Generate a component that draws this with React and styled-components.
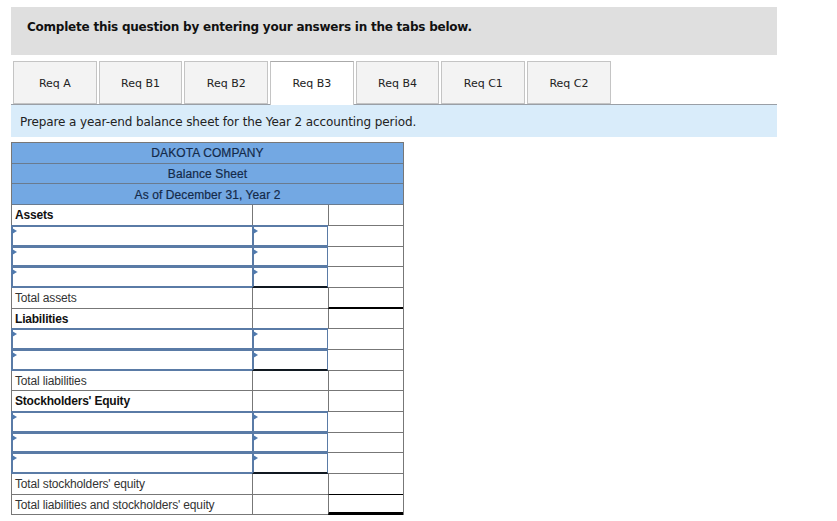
import React from "react";
import styled, { createGlobalStyle } from "styled-components";

const Global = createGlobalStyle`
  html, body { margin: 0; padding: 0; background: #fff; }
`;

const Page = styled.div`
  width: 837px;
  height: 521px;
  overflow: hidden;
  box-sizing: border-box;
  padding: 7px 60px 0 11px;
  font-family: "DejaVu Sans", Verdana, sans-serif;
  color: #111;
`;

const Banner = styled.div`
  height: 48px;
  background: #dfdfdf;
  padding: 12px 16px 0;
  box-sizing: border-box;
  font-size: 12px;
  letter-spacing: -0.23px;
  line-height: 17px;
  font-weight: 700;
`;

const TabBar = styled.div`
  display: flex;
  gap: 2px;
  margin-top: 6px;
  padding-left: 2px;
  height: 44px;
  box-sizing: border-box;
  border-bottom: 1px solid #9a9fa6;
`;

const Tab = styled.div`
  width: 83.7px;
  height: ${(p) => (p.$active ? "44px" : "43px")};
  box-sizing: border-box;
  display: flex;
  align-items: center;
  justify-content: center;
  padding-top: ${(p) => (p.$active ? "0" : "1px")};
  font-size: 11px;
  color: #222;
  background: ${(p) => (p.$active ? "#fff" : "#f3f3f3")};
  border: 1px solid #c4c4c4;
  border-bottom: ${(p) => (p.$active ? "none" : "1px solid #c4c4c4")};
  border-top-color: ${(p) => (p.$active ? "#aaa" : "#c4c4c4")};
`;

const Info = styled.div`
  height: 32px;
  background: #d9ecfa;
  padding: 0 9px;
  font-size: 12px;
  letter-spacing: -0.1px;
  line-height: 35px;
  color: #222;
`;

const Sheet = styled.div`
  width: 393px;
  margin-top: 5px;
  font-family: "Liberation Sans", Arial, sans-serif;
  font-size: 12px;
  border: 1px solid #777;
  border-bottom: none;
  box-sizing: border-box;
`;

const Title = styled.div`
  height: ${(p) => p.$h}px;
  box-sizing: border-box;
  background: #73a8e3;
  color: #142a4a;
  text-align: center;
  line-height: ${(p) => p.$lh}px;
  letter-spacing: 0.1px;
  -webkit-text-stroke: 0.2px #142a4a;
  border-bottom: 1px solid #6a7b8f;
`;

const Row = styled.div`
  display: grid;
  grid-template-columns: 240px 76px 75px;
  grid-template-rows: minmax(0, 1fr);
  height: ${(p) => p.$h}px;
`;

const Cell = styled.div`
  box-sizing: border-box;
  padding: 2px 0 0 3px;
  line-height: 17px;
  white-space: nowrap;
  letter-spacing: ${(p) => (p.$bold ? "-0.2px" : "-0.15px")};
  color: ${(p) => (p.$bold ? "#111" : "#333")};
  font-weight: ${(p) => (p.$bold ? 700 : 400)};
  border-bottom: ${(p) => p.$under || "1px solid #777"};
  & + & { border-left: 1px solid #777; }
`;

const EntryCell = styled.div`
  position: relative;
  box-sizing: border-box;
  margin-top: -1px;
  height: calc(100% + 1px);
  border: 2px solid #5a7ba6;
  border-right-width: ${(p) => (p.$amount ? "1px" : "0")};
  border-bottom: ${(p) => (p.$last && p.$amount ? "2px solid #101820" : "2px solid #5a7ba6")};
  margin-left: ${(p) => (p.$first ? "-1px" : "0")};
  background: #fff;
  &::before {
    content: "";
    position: absolute;
    left: -1px;
    top: 1px;
    border-left: 5px solid #4f79ad;
    border-top: 3px solid transparent;
    border-bottom: 3px solid transparent;
  }
`;

const EntryInput = styled.input`
  display: block;
  width: 100%;
  height: 100%;
  border: 0;
  padding: 0;
  background: transparent;
  outline: none;
`;

const tabs = ["Req A", "Req B1", "Req B2", "Req B3", "Req B4", "Req C1", "Req C2"];

const THICK = "2px solid #000";
const THIN = "1px solid #000";

const rows = [
  { h: 21, label: "Assets", bold: true },
  { h: 21, entry: true },
  { h: 20, entry: true },
  { h: 21, entry: true, last: true },
  { h: 21, label: "Total assets", under3: THICK },
  { h: 20, label: "Liabilities", bold: true },
  { h: 21, entry: true },
  { h: 21, entry: true, last: true },
  { h: 20, label: "Total liabilities" },
  { h: 21, label: "Stockholders' Equity", bold: true },
  { h: 21, entry: true },
  { h: 20, entry: true },
  { h: 21, entry: true, last: true },
  { h: 21, label: "Total stockholders' equity", under3: THIN },
  { h: 20, label: "Total liabilities and stockholders' equity", under3: "3px solid #000" },
];

function SheetRow({ row }) {
  if (row.entry) {
    return (
      <Row $h={row.h}>
        <EntryCell $first $last={row.last}><EntryInput aria-label="Account" /></EntryCell>
        <EntryCell $amount $last={row.last}><EntryInput aria-label="Amount" /></EntryCell>
        <Cell />
      </Row>
    );
  }
  return (
    <Row $h={row.h}>
      <Cell $bold={row.bold}>{row.label}</Cell>
      <Cell />
      <Cell $under={row.under3} />
    </Row>
  );
}

export default function App() {
  return (
    <Page>
      <Global />
      <Banner>Complete this question by entering your answers in the tabs below.</Banner>
      <TabBar>
        {tabs.map((t) => (
          <Tab key={t} $active={t === "Req B3"}>{t}</Tab>
        ))}
      </TabBar>
      <Info>Prepare a year-end balance sheet for the Year 2 accounting period.</Info>
      <Sheet>
        <Title $h={21} $lh={20}>DAKOTA COMPANY</Title>
        <Title $h={20} $lh={20}>Balance Sheet</Title>
        <Title $h={21} $lh={22}>As of December 31, Year 2</Title>
        {rows.map((r, i) => (
          <SheetRow key={i} row={r} />
        ))}
      </Sheet>
    </Page>
  );
}
